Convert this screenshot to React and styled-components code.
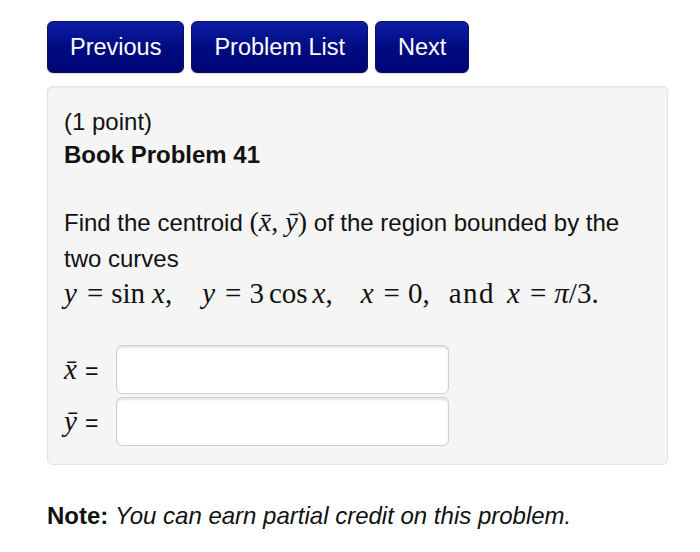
import styled, { createGlobalStyle } from "styled-components";

const GlobalStyle = createGlobalStyle`
  html, body {
    margin: 0;
    padding: 0;
    background: #fff;
  }
  body {
    font-family: "Liberation Sans", Arial, sans-serif;
    color: #111;
  }
`;

function App() {
  return (
    <Page>
      <GlobalStyle />
      <Nav>
        <NavButton>Previous</NavButton>
        <NavButton>Problem List</NavButton>
        <NavButton>Next</NavButton>
      </Nav>

      <Panel>
        <Points>(1 point)</Points>
        <Title>Book Problem 41</Title>

        <Question>
          Find the centroid <Inline>(<I>x̄</I>, <I>ȳ</I>)</Inline> of the region
          bounded by the two curves
        </Question>
        <MathLine>
          <I>y</I>
          <Eq>=</Eq>sin<Sp w={7} />
          <I>x</I>,<Sp w={30} />
          <I>y</I>
          <Eq>=</Eq>3<Sp w={5} />cos<Sp w={5} />
          <I>x</I>,<Sp w={28} />
          <I>x</I>
          <Eq>=</Eq>0,<Sp w={19} />
          <Word>and</Word>
          <Sp w={12} />
          <I>x</I>
          <Eq>=</Eq>
          <I>π</I>/3.
        </MathLine>

        <Answers>
          <AnswerRow>
            <Label>
              <I>x̄</I>
              <LabelEq>=</LabelEq>
            </Label>
            <AnswerInput />
          </AnswerRow>
          <AnswerRow>
            <Label>
              <I>ȳ</I>
              <LabelEq>=</LabelEq>
            </Label>
            <AnswerInput />
          </AnswerRow>
        </Answers>
      </Panel>

      <Note>
        <b>Note:</b> <i>You can earn partial credit on this problem.</i>
      </Note>
    </Page>
  );
}

const Page = styled.div`
  width: 700px;
  height: 552px;
  padding: 21px 32px 0 47px;
  box-sizing: border-box;
`;
const Nav = styled.div`
  display: flex;
  gap: 7px;
`;
const NavButton = styled.button`
  height: 52px;
  padding: 0 22px;
  border: 1px solid #0b1258;
  border-radius: 6px;
  background: linear-gradient(to bottom, #0c1ea6, #000a7e 55%, #000575);
  color: #fff;
  font-family: "Liberation Sans", Arial, sans-serif;
  font-size: 23.5px;
  box-shadow: 0 1px 1px rgba(0, 0, 0, 0.15);
`;
const Panel = styled.div`
  margin-top: 13px;
  width: 621px;
  box-sizing: border-box;
  padding: 18px 16px 18px;
  background: #f5f5f5;
  border: 1px solid #e3e3e3;
  border-radius: 5px;
  box-shadow: inset 0 1px 1px rgba(0, 0, 0, 0.05);
  font-size: 24px;
`;
const Points = styled.div`
  line-height: 33px;
`;
const Title = styled.div`
  line-height: 33px;
  font-weight: bold;
`;
const Question = styled.div`
  margin-top: 33px;
  line-height: 36px;
`;
const Inline = styled.span`
  font-family: "Liberation Serif", "Times New Roman", serif;
  font-size: 28px;
`;
const I = styled.span`
  font-family: "Liberation Serif", "Times New Roman", serif;
  font-style: italic;
`;
const MathLine = styled.div`
  font-family: "Liberation Serif", "Times New Roman", serif;
  font-size: 29px;
  line-height: 32px;
  white-space: nowrap;
`;
const Word = styled.span`
  letter-spacing: 1.5px;
`;
const Eq = styled.span`
  margin: 0 8px 0 10px;
`;
const Sp = styled.span`
  display: inline-block;
  width: ${(p) => p.w}px;
`;
const Answers = styled.div`
  margin-top: 36px;
  display: flex;
  flex-direction: column;
  gap: 3px;
`;
const AnswerRow = styled.div`
  display: flex;
  align-items: center;
`;
const Label = styled.span`
  width: 52px;
  font-size: 29px;
  white-space: nowrap;
`;
const LabelEq = styled.span`
  font-family: "Liberation Sans", Arial, sans-serif;
  font-size: 23px;
  margin-left: 8px;
`;
const AnswerInput = styled.input`
  width: 333px;
  height: 49px;
  box-sizing: border-box;
  border: 1px solid #cfcfcf;
  border-radius: 6px;
  background: #fff;
  box-shadow: inset 0 2px 2px rgba(0, 0, 0, 0.1);
`;
const Note = styled.div`
  margin-top: 36px;
  font-size: 24px;
  line-height: 30px;
`;

export default App;
